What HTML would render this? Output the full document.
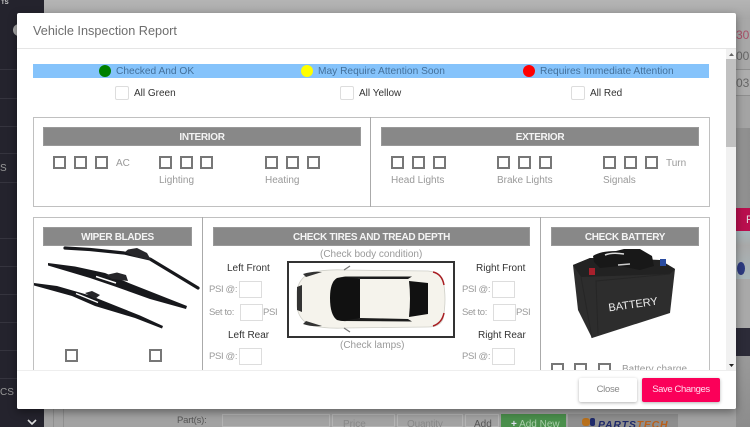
<!DOCTYPE html>
<html><head><meta charset="utf-8">
<style>
html,body{margin:0;padding:0;width:750px;height:427px;overflow:hidden;background:#a4a4a4;font-family:"Liberation Sans",sans-serif}
#w{left:0;top:0;width:750px;height:427px;overflow:hidden;filter:blur(.35px)}
div,span{position:absolute;box-sizing:border-box}
.t{white-space:nowrap;line-height:16px;font-size:10px;color:#999}
.s{font-size:9.5px;letter-spacing:-.35px}
.c{width:13px;height:13px;border:2px solid #777;background:#fff}
.a{width:14px;height:14px;border:1px solid #ddd;border-radius:2px;background:#fff}
.h{background:#888;color:#f4f4f4;font-size:10px;font-weight:bold;text-align:center;height:19px;line-height:19px;border:1px solid #999;letter-spacing:-.32px}
.i{width:23px;height:17px;border:1px solid #ddd;background:#fff}
.d{color:#333;font-size:10px;text-align:center;white-space:nowrap;line-height:16px}
.p{border:1px solid #c0c0c0}
.l{color:#44709a;font-size:10.2px}
.n{left:0;width:17px;height:1px;background:#35343e}
</style></head><body><div id="w">
<!-- background -->
<div style="left:0;top:0;width:44px;height:427px;background:#24232d"></div>
<div style="left:44px;top:0;width:706px;height:20px;background:linear-gradient(#b4b4b4,#a6a6a6)"></div>
<div class="t" style="left:1px;top:-5px;font-size:6px;font-weight:bold;color:#ccc">TS</div>
<div style="left:13px;top:24px;width:12px;height:12px;border-radius:50%;background:#aaa"></div>
<div class="t" style="left:0;top:161px;color:#999">S</div>
<div class="t" style="left:0;top:385px;color:#999">CS</div>
<div class="n" style="top:69px"></div><div class="n" style="top:98px"></div><div class="n" style="top:126px"></div>
<div class="n" style="top:153px"></div><div class="n" style="top:182px"></div><div class="n" style="top:238px"></div>
<div class="n" style="top:266px"></div><div class="n" style="top:294px"></div><div class="n" style="top:322px"></div>
<div class="n" style="top:350px"></div><div class="n" style="top:378px"></div>
<svg style="position:absolute;left:26px;top:418px" width="12" height="8"><path d="M2 2l4 4 4-4" fill="none" stroke="#ddd" stroke-width="1.6"/></svg>
<div style="left:44px;top:409px;width:706px;height:18px;background:#a2a2a2"></div>
<div style="left:53px;top:409px;width:1px;height:18px;background:#8f8f8f"></div>
<div style="left:63px;top:409px;width:1px;height:18px;background:#8f8f8f"></div>
<div class="d" style="left:177px;top:413px;color:#555;font-size:9.5px;letter-spacing:-.2px">Part(s):</div>
<div style="left:222px;top:414px;width:108px;height:13px;border:1px solid #b4b4b4"></div>
<div style="left:332px;top:414px;width:63px;height:13px;border:1px solid #b4b4b4"></div>
<div class="t" style="left:343px;top:417px;color:#888">Price</div>
<div style="left:397px;top:414px;width:66px;height:13px;border:1px solid #b4b4b4"></div>
<div class="t" style="left:407px;top:417px;color:#888;letter-spacing:-.2px">Quantity</div>
<div style="left:465px;top:414px;width:34px;height:13px;border:1px solid #b4b4b4"></div>
<div class="t" style="left:474px;top:417px;color:#555">Add</div>
<div style="left:501px;top:414px;width:65px;height:13px;background:#4a8f4c"></div>
<div class="t" style="left:511px;top:417px;color:#a9cdaa"><b style="color:#dde">+</b> Add New</div>
<div style="left:568px;top:414px;width:110px;height:13px;background:#8e8e8e"></div>
<div style="left:582px;top:418px;width:8px;height:8px;background:#b8701c;border-radius:3px"></div>
<div style="left:590px;top:418px;width:5px;height:8px;background:#1f2a6a;border-radius:2px"></div>
<div class="t" style="left:598px;top:417px;font-weight:bold;font-style:italic;font-size:10.5px;color:#1f2a6a;letter-spacing:.8px">PARTS<span style="position:static;color:#b8601c">TECH</span></div>
<!-- right side bg -->
<div style="left:736px;top:19px;width:14px;height:50px;background:#a8a8a8"></div>
<div style="left:736px;top:69px;width:14px;height:27px;background:#adadad"></div>
<div style="left:736px;top:95px;width:14px;height:1px;background:#8e8e8e"></div>
<div style="left:736px;top:69px;width:14px;height:1px;background:#8e8e8e"></div>
<div style="left:736px;top:96px;width:14px;height:32px;background:#a4a4a4"></div>
<div style="left:736px;top:128px;width:14px;height:80px;background:linear-gradient(90deg,#999,#8d8d8d)"></div>
<div class="t" style="left:736px;top:27px;color:#a85068;font-size:12px">305</div>
<div class="t" style="left:736px;top:48px;color:#666;font-size:12px">00 F</div>
<div class="t" style="left:736px;top:75px;color:#666;font-size:12px">03</div>
<div style="left:736px;top:208px;width:14px;height:23px;background:#b90f4e"></div>
<div class="t" style="left:746px;top:212px;color:#ddd;font-size:11px">F</div>
<div style="left:736px;top:231px;width:14px;height:48px;background:linear-gradient(#a5b7bb,#a9a9a9 30%,#a8b7bb)"></div>
<div style="left:737px;top:262px;width:8px;height:13px;border-radius:50%;background:#2c3a80"></div>
<div style="left:736px;top:279px;width:14px;height:49px;background:#a9a9a9"></div>
<div style="left:736px;top:328px;width:14px;height:28px;background:#2c2b38"></div>
<div style="left:736px;top:356px;width:14px;height:71px;background:linear-gradient(#9a9a9a,#8c8c8c)"></div>

<!-- modal -->
<div style="left:17px;top:13px;width:719px;height:396px;background:#fff;border-radius:2px;box-shadow:0 3px 9px rgba(0,0,0,.4)"></div>
<div class="t" style="left:33px;top:23px;font-size:12.7px;color:#6e6e6e">Vehicle Inspection Report</div>
<div style="left:17px;top:48px;width:719px;height:1px;background:#e5e5e5"></div>

<!-- legend -->
<div style="left:33px;top:64px;width:676px;height:14px;background:#85c3fb"></div>
<div style="left:99px;top:65px;width:12px;height:12px;border-radius:50%;background:#008000"></div>
<div style="left:301px;top:65px;width:12px;height:12px;border-radius:50%;background:#ff0"></div>
<div style="left:523px;top:65px;width:12px;height:12px;border-radius:50%;background:#f00"></div>
<div class="t l" style="left:116px;top:64px">Checked And OK</div>
<div class="t l" style="left:318px;top:64px">May Require Attention Soon</div>
<div class="t l" style="left:540px;top:64px">Requires Immediate Attention</div>
<div class="a" style="left:115px;top:86px"></div><div class="t" style="left:134px;top:86px;color:#333">All Green</div>
<div class="a" style="left:340px;top:86px"></div><div class="t" style="left:359px;top:86px;color:#333">All Yellow</div>
<div class="a" style="left:571px;top:86px"></div><div class="t" style="left:590px;top:86px;color:#333">All Red</div>

<!-- panel 1 -->
<div class="p" style="left:33px;top:117px;width:677px;height:90px"></div>
<div style="left:370px;top:117px;width:1px;height:90px;background:#aaa"></div>
<div class="h" style="left:43px;top:127px;width:318px">INTERIOR</div>
<div class="h" style="left:381px;top:127px;width:318px">EXTERIOR</div>
<div class="c" style="left:53px;top:156px"></div><div class="c" style="left:74px;top:156px"></div><div class="c" style="left:95px;top:156px"></div>
<div class="c" style="left:159px;top:156px"></div><div class="c" style="left:180px;top:156px"></div><div class="c" style="left:200px;top:156px"></div>
<div class="c" style="left:265px;top:156px"></div><div class="c" style="left:286px;top:156px"></div><div class="c" style="left:307px;top:156px"></div>
<div class="c" style="left:391px;top:156px"></div><div class="c" style="left:412px;top:156px"></div><div class="c" style="left:433px;top:156px"></div>
<div class="c" style="left:497px;top:156px"></div><div class="c" style="left:518px;top:156px"></div><div class="c" style="left:539px;top:156px"></div>
<div class="c" style="left:603px;top:156px"></div><div class="c" style="left:624px;top:156px"></div><div class="c" style="left:645px;top:156px"></div>
<div class="t" style="left:116px;top:156px">AC</div>
<div class="t" style="left:159px;top:173px">Lighting</div>
<div class="t" style="left:265px;top:173px">Heating</div>
<div class="t" style="left:391px;top:173px">Head Lights</div>
<div class="t" style="left:497px;top:173px">Brake Lights</div>
<div class="t" style="left:603px;top:173px">Signals</div>
<div class="t" style="left:666px;top:156px">Turn</div>

<!-- panel 2 -->
<div class="p" style="left:33px;top:217px;width:677px;height:170px"></div>
<div style="left:202px;top:217px;width:1px;height:153px;background:#aaa"></div>
<div style="left:540px;top:217px;width:1px;height:153px;background:#aaa"></div>
<div class="h" style="left:43px;top:227px;width:149px">WIPER BLADES</div>
<div class="h" style="left:213px;top:227px;width:317px">CHECK TIRES AND TREAD DEPTH</div>
<div class="h" style="left:551px;top:227px;width:148px">CHECK BATTERY</div>

<!-- wipers -->
<svg style="position:absolute;left:30px;top:240px" width="172" height="92" viewBox="30 240 172 92">
<path d="M65 248 L90 249.5 L124 253 L150 259 L198 288" fill="none" stroke="#17181c" stroke-width="3.2" stroke-linecap="round" stroke-linejoin="round"/>
<path d="M125 252 L128 249.5 L137 248 L147 253 L151 260 L136 257Z" fill="#26262a"/>
<path d="M48 263 L75 266.5 L105 273 L130 283.5 L187 306 L186 309 L150 299 L115 286.5 L90 278 L48 265.5Z" fill="#17181c"/>
<path d="M106 275 L117 272.5 L126 275 L128 281 L112 279Z" fill="#26262a"/>
<path d="M96 276.5 L116 283" stroke="#fff" stroke-width="1.5"/>
<path d="M34 283 L57 286 L90 295.5 L120 307.5 L140 315.5 L163 326 L162 328.5 L135 318 L95 306 L72 296 L34 285.5Z" fill="#17181c"/>
<path d="M85 293 L92 291 L100 295 L95 299Z" fill="#26262a"/>
<path d="M76 293.5 L98 302.5" stroke="#fff" stroke-width="1.4"/>
</svg>
<div class="c" style="left:65px;top:349px"></div>
<div class="c" style="left:149px;top:349px"></div>

<!-- tires -->
<div class="t" style="left:320px;top:247px">(Check body condition)</div>
<div class="t" style="left:340px;top:338px">(Check lamps)</div>
<div class="d" style="left:227px;top:261px">Left Front</div>
<div class="d" style="left:228px;top:328px">Left Rear</div>
<div class="t s" style="left:209px;top:282px">PSI @:</div><div class="i" style="left:239px;top:281px"></div>
<div class="t s" style="left:209px;top:305px">Set to:</div><div class="i" style="left:240px;top:304px"></div><div class="t s" style="left:263px;top:305px">PSI</div>
<div class="t s" style="left:209px;top:349px">PSI @:</div><div class="i" style="left:239px;top:348px"></div>
<div class="d" style="left:476px;top:261px">Right Front</div>
<div class="d" style="left:478px;top:328px">Right Rear</div>
<div class="t s" style="left:462px;top:282px">PSI @:</div><div class="i" style="left:492px;top:281px"></div>
<div class="t s" style="left:462px;top:305px">Set to:</div><div class="i" style="left:493px;top:304px"></div><div class="t s" style="left:516px;top:305px">PSI</div>
<div class="t s" style="left:462px;top:349px">PSI @:</div><div class="i" style="left:492px;top:348px"></div>

<!-- car -->
<svg style="position:absolute;left:287px;top:261px" width="168" height="77" viewBox="287 261 168 77">
<rect x="288" y="262" width="166" height="75" fill="#fff" stroke="#333" stroke-width="2"/>
<path d="M297 292 Q298 279 310 273 Q325 269 345 270 L428 271 Q440 272 443 280 Q447 299 443 319 Q440 327 428 327 L345 328 Q325 329 310 325 Q298 319 297 306Z" fill="#f5f3ec" stroke="#cfcfc8" stroke-width=".8"/>
<path d="M297 287 L302 285 L302 312 L297 310Z M303 274 Q312 271 322 272 L306 277Z M303 324 Q312 327 322 326 L306 321Z" fill="#333"/>
<path d="M330 298 Q330 282 337 278 Q347 275 360 279 L360 318 Q347 323 337 320 Q330 315 330 298Z" fill="#111"/>
<path d="M342 276.5 L412 276.5 L408 279 L360 279Z M342 321 L412 321.5 L408 319 L360 318Z" fill="#1c1c1c"/>
<path d="M409 281 L428 283 L428 314 L409 317 Q411 298 409 281Z" fill="#111"/>
<path d="M433 272 Q442 274 444 285 M433 326 Q442 323 444 313" fill="none" stroke="#a81d22" stroke-width="1.5"/>
<path d="M344 270 L350 266 M344 328 L350 332" stroke="#777" stroke-width="1.3"/>
</svg>

<!-- battery -->
<svg style="position:absolute;left:560px;top:245px" width="130" height="100" viewBox="560 245 130 100">
<path d="M573 265 L590 258 L660 260 L675 269 L670 313 L592 338 L578 310Z" fill="#2d2d2d"/>
<path d="M573 265 L590 258 L660 260 L675 269 L670 274 L581 277Z" fill="#222"/>
<path d="M581 277 L592 338 M670 274 L596 281 L598 334" fill="none" stroke="#262626" stroke-width="1"/>
<path d="M593 256 Q600 251 616 251 L624 249 L640 249 L652 256 L654 266 L640 270 L620 266 L600 268 L594 262Z" fill="#181818"/>
<path d="M605 255 Q612 252 624 254" fill="none" stroke="#ddd" stroke-width="1.5"/>
<path d="M618 265 L630 264" stroke="#ccc" stroke-width="1.4"/>
<rect x="589" y="268" width="6" height="7" fill="#a8202c"/>
<rect x="660" y="259" width="6" height="7" fill="#2a4ca0"/>
<text x="633" y="308" transform="rotate(-8 633 304)" text-anchor="middle" font-family="Liberation Sans" font-size="11" fill="#eee">BATTERY</text>
</svg>
<div class="c" style="left:551px;top:363px"></div>
<div class="c" style="left:574px;top:363px"></div>
<div class="c" style="left:598px;top:363px"></div>
<div class="t" style="left:622px;top:362px">Battery charge</div>

<!-- scrollbar -->
<div style="left:726px;top:49px;width:10px;height:321px;background:#f1f1f1"></div>
<div style="left:726px;top:59px;width:10px;height:88px;background:#c1c1c1"></div>
<svg style="position:absolute;left:726px;top:49px" width="10" height="321"><path d="M3 7h5l-2.5-3z" fill="#666"/><path d="M3 315h5l-2.5 3z" fill="#222"/></svg>

<!-- footer -->
<div style="left:17px;top:370px;width:719px;height:39px;background:#fff;border-top:1px solid #eee;border-radius:0 0 2px 2px"></div>
<div style="left:579px;top:378px;width:58px;height:24px;background:#fff;border-radius:2px;box-shadow:0 1px 3px rgba(0,0,0,.3);color:#888;font-size:9.5px;letter-spacing:-.3px;text-align:center;line-height:24px">Close</div>
<div style="left:642px;top:378px;width:78px;height:24px;background:#fb0059;border-radius:2px;box-shadow:0 1px 3px rgba(0,0,0,.3);color:#fde;font-size:9.5px;letter-spacing:-.4px;text-align:center;line-height:24px">Save Changes</div>
</div></body></html>
